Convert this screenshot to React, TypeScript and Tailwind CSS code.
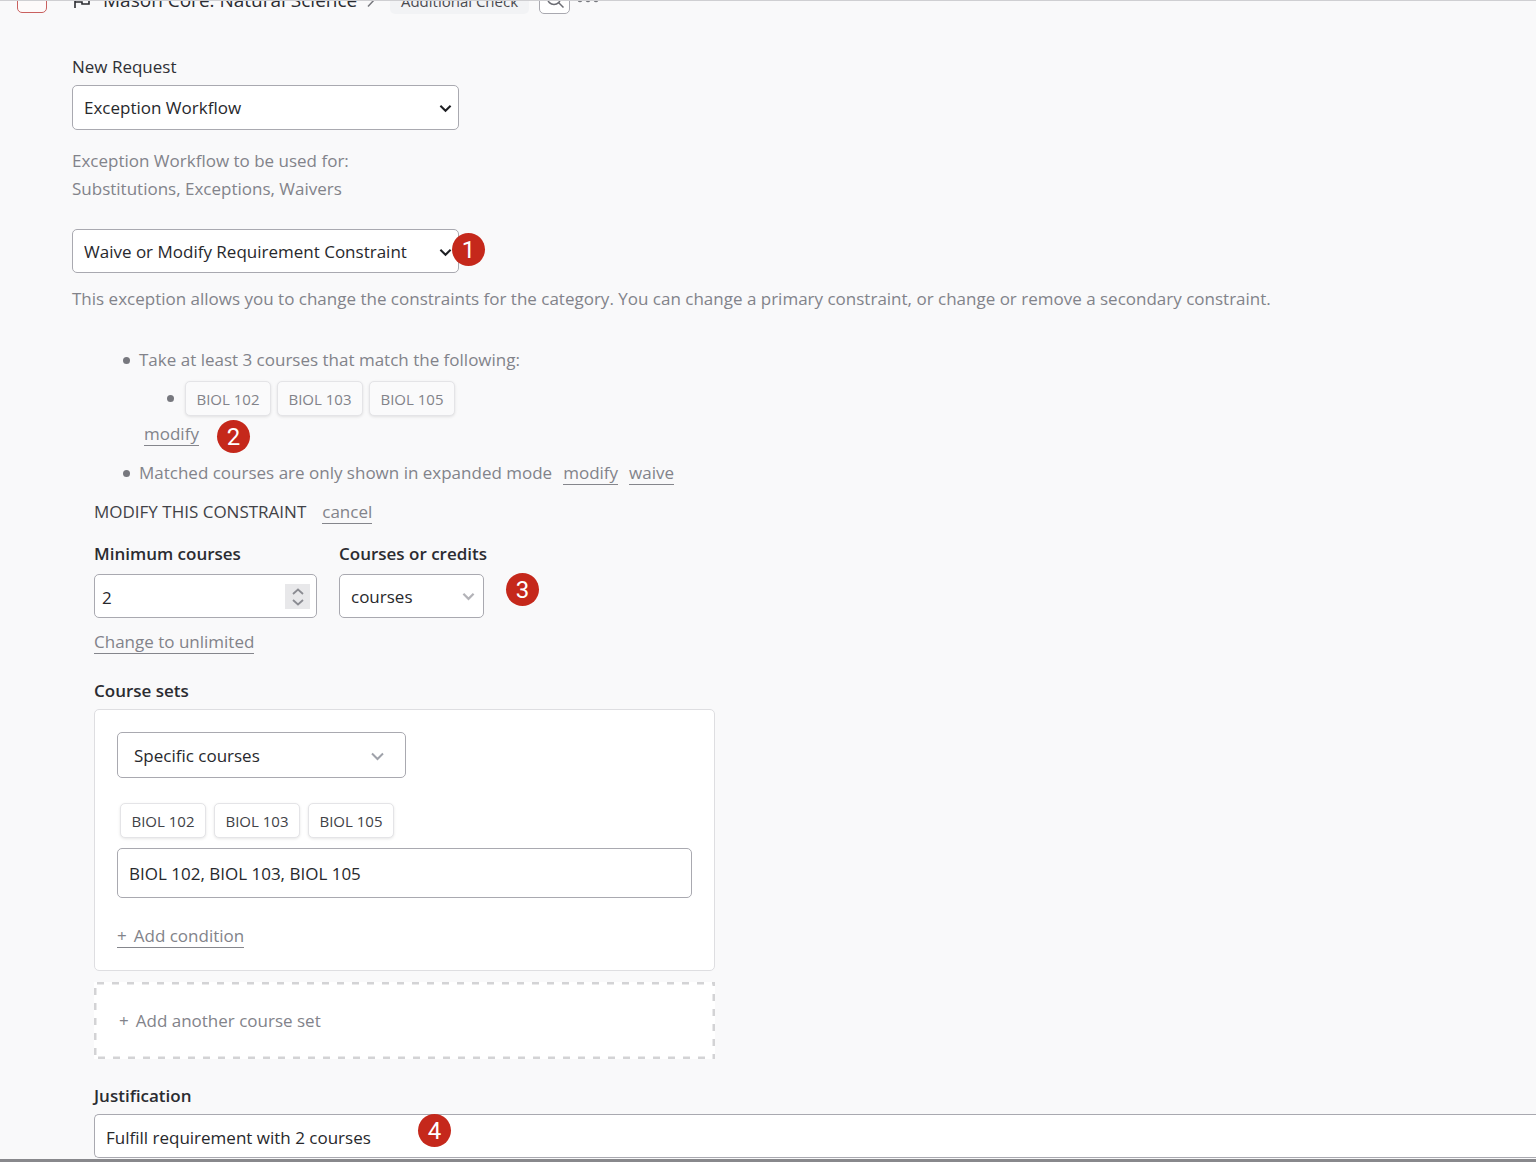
import React from "react";

const courses = ["BIOL 102", "BIOL 103", "BIOL 105"];

const field =
  "block w-full rounded-[5px] border border-[#a9a9b0] bg-white text-[#27282c] outline-none";

function Marker({ n, className = "" }: { n: number; className?: string }) {
  return (
    <span
      className={`flex size-[33px] shrink-0 items-center justify-center rounded-full bg-[#c5281b] pt-px font-['Roboto',sans-serif] text-[24px] leading-none text-white ${className}`}
    >
      {n}
    </span>
  );
}

function Chevron({ className = "", width = 2 }: { className?: string; width?: number }) {
  return (
    <svg
      viewBox="0 0 14 9"
      className={`pointer-events-none absolute ${className}`}
      fill="none"
      stroke="currentColor"
      strokeWidth={width}
      aria-hidden="true"
    >
      <path d="M1.5 1.5 7 7l5.5-5.5" />
    </svg>
  );
}

function TextLink({ children }: { children: React.ReactNode }) {
  return (
    <a
      href="#"
      className="inline-flex gap-[7px] whitespace-nowrap border-b border-[#85868c] leading-[22px] text-[#82838a]"
    >
      {children}
    </a>
  );
}

function CourseChip({ name, className }: { name: string; className: string }) {
  return (
    <span
      className={`flex h-[35px] w-[86px] items-center justify-center whitespace-nowrap rounded-[5px] border border-[#e4e4e7] pt-px text-[15px] shadow-[0_1px_3px_rgba(0,0,0,0.1)] ${className}`}
    >
      {name}
    </span>
  );
}

function Header() {
  return (
    <header className="flex h-[14px] items-end overflow-hidden border-t border-[#cfcfd2] pl-[17px]">
      <button
        type="button"
        aria-label="Toggle"
        className="mb-px h-[28px] w-[30px] shrink-0 rounded-[5px] border border-[#c9605f] bg-[#fdfafa]"
      />
      <svg
        viewBox="0 0 18 28"
        className="ml-[26px] h-[28px] w-[18px] shrink-0"
        fill="none"
        stroke="#2b2c31"
        strokeWidth="1.6"
        aria-hidden="true"
      >
        <path d="M2 22V5h7v3h7v10H9v-2H2" />
      </svg>
      <h1 className="ml-[12px] h-[28px] w-[252px] shrink-0 whitespace-nowrap text-[19px] leading-[28px] text-[#2b2c31]">
        Mason Core: Natural Science
      </h1>
      <svg
        viewBox="0 0 9 28"
        className="ml-[12px] h-[28px] w-[9px] shrink-0"
        fill="none"
        stroke="#77787e"
        strokeWidth="1.5"
        aria-hidden="true"
      >
        <path d="m1 6 6.500 7.500L1 20.500" />
      </svg>
      <span className="ml-[14px] h-[28px] w-[139px] shrink-0 whitespace-nowrap rounded-[5px] bg-[#f2f3f5] text-center text-[15px] leading-[31px] text-[#4a4b50]">
        Additional Check
      </span>
      <button
        type="button"
        aria-label="Search"
        className="ml-[10px] flex h-[30px] w-[31px] shrink-0 items-center justify-center rounded-[5px] border border-[#a9a9b0] bg-white"
      >
        <svg viewBox="0 0 18 18" className="size-[18px]" fill="none" stroke="#6b6c73" strokeWidth="1.5" aria-hidden="true">
          <circle cx="8" cy="8" r="6.500" />
          <path d="m12.500 12.500 5 5" />
        </svg>
      </button>
      <svg viewBox="0 0 24 28" className="ml-[6px] h-[28px] w-[24px] shrink-0" fill="#77787e" aria-hidden="true">
        <circle cx="4" cy="14" r="2.300" />
        <circle cx="12" cy="14" r="2.300" />
        <circle cx="20" cy="14" r="2.300" />
      </svg>
    </header>
  );
}

function RequestSection() {
  return (
    <section className="pl-[72px]">
      <label htmlFor="request" className="block text-[#2f3035]">
        New Request
      </label>
      <div className="relative mt-1 w-[387px]">
        <select id="request" className={`${field} h-[45px] appearance-none pl-[11px] pr-8`}>
          <option>Exception Workflow</option>
        </select>
        <Chevron className="right-[7px] top-[19px] h-[9px] w-[13px] text-[#1f2024]" width={2.2} />
      </div>
      <p className="mt-[17px]">
        Exception Workflow to be used for:
        <br />
        Substitutions, Exceptions, Waivers
      </p>
      <div className="relative mt-[26px] w-[387px]">
        <select
          aria-label="Exception type"
          className={`${field} h-[44px] appearance-none pl-[11px] pr-8 pt-[2px]`}
        >
          <option>Waive or Modify Requirement Constraint</option>
        </select>
        <Chevron className="right-[7px] top-[19px] h-[9px] w-[13px] text-[#1f2024]" width={2.2} />
        <Marker n={1} className="absolute -right-[26px] top-[4px]" />
      </div>
      <p className="mt-3">
        This exception allows you to change the constraints for the category. You can change a
        primary constraint, or change or remove a secondary constraint.
      </p>
    </section>
  );
}

function Bullet() {
  return <span className="size-[7px] shrink-0 rounded-full bg-[#77787e]" />;
}

function Constraints() {
  return (
    <ul className="mt-[33px] pl-[123px]">
      <li>
        <div className="flex items-center gap-[9px]">
          <Bullet />
          Take at least 3 courses that match the following:
        </div>
        <ul className="mt-[7px] pl-[44px]">
          <li className="flex items-center gap-[11px]">
            <Bullet />
            <div className="flex gap-[6px]">
              {courses.map((c) => (
                <CourseChip key={c} name={c} className="bg-[#fafafb] text-[#82838a]" />
              ))}
            </div>
          </li>
        </ul>
        <div className="mt-[4px] flex h-[28px] items-center gap-[18px] pl-[21px]">
          <TextLink>modify</TextLink>
          <Marker n={2} className="mt-[5px]" />
        </div>
      </li>
      <li className="mt-[11px] flex items-center">
        <Bullet />
        <span className="ml-[9px] mr-[11px]">Matched courses are only shown in expanded mode</span>
        <span className="flex gap-[11px]">
          <TextLink>modify</TextLink>
          <TextLink>waive</TextLink>
        </span>
      </li>
    </ul>
  );
}

function ConstraintForm() {
  return (
    <section className="mt-[11px] pl-[94px]">
      <div className="flex items-center gap-4">
        <h2 className="text-[#414247]">MODIFY THIS CONSTRAINT</h2>
        <TextLink>cancel</TextLink>
      </div>
      <div className="mt-[14px] flex items-end gap-[22px]">
        <div className="w-[223px]">
          <label htmlFor="minimum" className="block font-semibold text-[#2b2c31]">
            Minimum courses
          </label>
          <div className="relative mt-[6px]">
            <input
              id="minimum"
              type="number"
              defaultValue={2}
              className={`${field} h-[44px] pl-[7px] pt-[2px] [appearance:textfield]`}
            />
            <button
              type="button"
              aria-label="Step value"
              className="absolute right-[7px] top-[10px] flex h-[25px] w-[25px] items-center justify-center bg-[#e8e8ea]"
            >
              <svg viewBox="0 0 12 18" className="h-[18px] w-[12px]" fill="none" stroke="#8b8c92" strokeWidth="1.8" aria-hidden="true">
                <path d="m1 6 5-4.500L11 6M1 12l5 4.500 5-4.500" />
              </svg>
            </button>
          </div>
        </div>
        <div>
          <label htmlFor="unit" className="block w-[145px] whitespace-nowrap font-semibold text-[#2b2c31]">
            Courses or credits
          </label>
          <div className="relative mt-[6px] w-[145px]">
            <select id="unit" className={`${field} h-[44px] appearance-none pl-[11px] pt-[2px]`}>
              <option>courses</option>
            </select>
            <Chevron className="right-[9px] top-[18px] h-[9px] w-[13px] text-[#b3b3b8]" width={2.4} />
          </div>
        </div>
        <Marker n={3} className="mb-[12px]" />
      </div>
      <div className="mt-[10px] flex h-[28px] items-center">
        <TextLink>Change to unlimited</TextLink>
      </div>

      <h3 className="mt-[21px] font-semibold text-[#2b2c31]">Course sets</h3>
      <div className="mt-[4px] max-w-[621px] rounded-[5px] border border-[#dedee1] bg-white px-[22px] pb-[20px] pt-[22px]">
        <div className="relative w-[289px]">
          <select
            aria-label="Course set type"
            className={`${field} h-[46px] appearance-none pl-[16px] pt-[2px]`}
          >
            <option>Specific courses</option>
          </select>
          <Chevron className="right-[21px] top-[20px] h-[9px] w-[15px] text-[#9fa2aa]" width={2} />
        </div>
        <div className="mt-[25px] flex gap-2 pl-[3px]">
          {courses.map((c) => (
            <CourseChip key={c} name={c} className="bg-white text-[#414247]" />
          ))}
        </div>
        <input
          aria-label="Courses"
          defaultValue="BIOL 102, BIOL 103, BIOL 105"
          className={`${field} mt-[10px] h-[50px] px-[11px]`}
        />
        <div className="mt-[24px] flex h-[28px] items-center">
          <TextLink>
            <span>+</span>
            <span>Add condition</span>
          </TextLink>
        </div>
      </div>
      <button
        type="button"
        className="relative mt-[11px] flex h-[77px] w-full max-w-[621px] items-center gap-[7px] bg-white pl-[25px] text-left"
      >
        <svg className="absolute inset-0 h-full w-full" fill="none" stroke="#d3d3d5" strokeWidth="5" aria-hidden="true">
          <rect width="100%" height="100%" strokeDasharray="7 8" strokeDashoffset="-3" />
        </svg>
        <span>+</span>
        <span>Add another course set</span>
      </button>

      <label htmlFor="justification" className="mt-[23px] block font-semibold text-[#2b2c31]">
        Justification
      </label>
      <div className="relative mt-1">
        <input
          id="justification"
          defaultValue="Fulfill requirement with 2 courses"
          className="block h-[44px] w-full rounded-l-[5px] border border-r-0 border-[#a9a9b0] bg-white px-[11px] pt-[2px] text-[#27282c] outline-none"
        />
        <Marker n={4} className="absolute left-[324px] top-0" />
      </div>
    </section>
  );
}

export default function App() {
  return (
    <main className="overflow-hidden border-b-[3px] border-[#88888c] bg-[#f9f9fa] pb-px font-['Open_Sans','Noto_Sans',sans-serif] text-[17px] leading-[28px] text-[#82838a]">
      <Header />
      <div className="pt-[39px]">
        <RequestSection />
        <Constraints />
        <ConstraintForm />
      </div>
    </main>
  );
}
